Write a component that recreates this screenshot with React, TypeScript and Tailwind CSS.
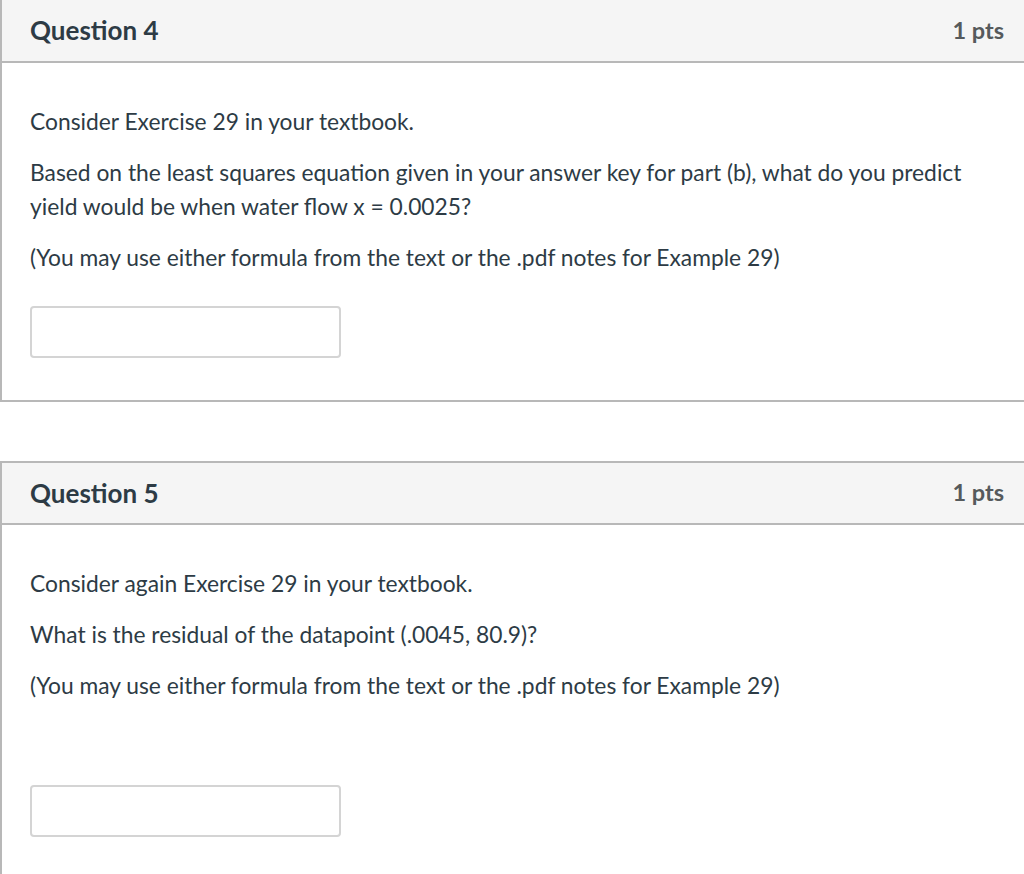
import React from 'react';

type Question = {
  title: string;
  points: string;
  paragraphs: string[];
  extraSpace?: boolean;
};

const questions: Question[] = [
  {
    title: 'Question 4',
    points: '1 pts',
    paragraphs: [
      'Consider Exercise 29 in your textbook.',
      'Based on the least squares equation given in your answer key for part (b), what do you predict yield would be when water flow x = 0.0025?',
      '(You may use either formula from the text or the .pdf notes for Example 29)',
    ],
  },
  {
    title: 'Question 5',
    points: '1 pts',
    paragraphs: [
      'Consider again Exercise 29 in your textbook.',
      'What is the residual of the datapoint (.0045, 80.9)?',
      '(You may use either formula from the text or the .pdf notes for Example 29)',
    ],
    extraSpace: true,
  },
];

const QuestionCard: React.FC<{ q: Question; first?: boolean }> = ({ q, first }) => (
  <div
    className={`border-l-2 border-b-2 border-[#b8b8b8] ${first ? '' : 'border-t-2 mt-[59px]'}`}
  >
    <div
      className={`flex items-center justify-between bg-[#f5f5f5] border-b-2 border-[#b8b8b8] pl-[28px] pr-[20px] ${first ? 'h-[63px]' : 'h-[62px]'}`}
    >
      <h2 className="text-[26px] font-bold text-[#2d3b45]">{q.title}</h2>
      <span className="text-[23.5px] font-bold text-[#565a5c]">{q.points}</span>
    </div>
    <div className={`pl-[28px] pr-[20px] pt-[41px] ${first ? 'pb-[42px]' : 'pb-[40px]'}`}>
      {q.paragraphs.map((p, i) => (
        <p key={i} className="text-[22.8px] leading-[34px] mb-[17px] last:mb-0 pr-[10px]">
          {p}
        </p>
      ))}
      {q.extraSpace && <div className="h-[34px]" />}
      <input
        type="text"
        className="mt-[32px] block w-[311px] h-[52px] rounded-[4px] border-2 border-[#d4d4d4] bg-white outline-none"
      />
    </div>
  </div>
);

export default function App() {
  return (
    <div
      className="min-h-screen bg-white text-[#2d3b45]"
      style={{ fontFamily: 'Lato, "Open Sans", sans-serif' }}
    >
      {questions.map((q, i) => (
        <QuestionCard key={q.title} q={q} first={i === 0} />
      ))}
    </div>
  );
}
